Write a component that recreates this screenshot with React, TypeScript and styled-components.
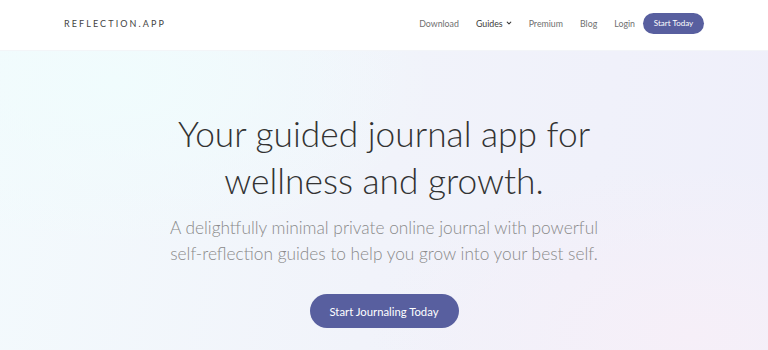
import React from 'react';
import styled, { createGlobalStyle } from 'styled-components';

const GlobalStyle = createGlobalStyle`
  html, body {
    margin: 0;
    padding: 0;
    background: #fff;
  }
  body {
    font-family: 'Lato', 'Open Sans', sans-serif;
    -webkit-font-smoothing: antialiased;
  }
`;

const Page = styled.div`
  width: 768px;
  height: 350px;
  overflow: hidden;
  display: flex;
  flex-direction: column;
`;

const Header = styled.header`
  box-sizing: border-box;
  height: 51px;
  flex-shrink: 0;
  display: flex;
  align-items: center;
  justify-content: space-between;
  padding: 0 64px 4px;
  background: #fff;
  border-bottom: 1px solid #f3f5f8;
`;

const Logo = styled.div`
  font-size: 9px;
  letter-spacing: 2.1px;
  color: #444;
  font-weight: 400;
  padding-top: 1px;
`;

const Nav = styled.nav`
  display: flex;
  align-items: center;
  gap: 17px;
`;

const NavLink = styled.a<{ $dark?: boolean }>`
  font-size: 8.8px;
  color: ${(p) => (p.$dark ? '#3d3d3d' : '#707070')};
  text-decoration: none;
  display: flex;
  align-items: center;
  gap: 3px;
`;

const Chevron = styled.svg`
  width: 6px;
  height: 6px;
`;

const NavButton = styled.a`
  margin-left: -9px;
  width: 61px;
  height: 21px;
  border-radius: 11px;
  background: #585f9f;
  color: #fff;
  font-size: 8px;
  display: flex;
  align-items: center;
  justify-content: center;
  text-decoration: none;
`;

const Hero = styled.section`
  flex: 1;
  display: flex;
  flex-direction: column;
  align-items: center;
  padding-top: 59px;
  background:
    radial-gradient(ellipse 60% 80% at 15% 10%, rgba(240, 252, 253, 1) 0%, rgba(240, 252, 253, 0) 70%),
    radial-gradient(ellipse 60% 80% at 90% 95%, rgba(246, 239, 248, 1) 0%, rgba(246, 239, 248, 0) 70%),
    linear-gradient(100deg, #f3fafd 0%, #f1f3fa 50%, #efeffa 100%);
`;

const Title = styled.h1`
  margin: 0;
  font-size: 35.3px;
  line-height: 47px;
  font-weight: 300;
  color: #333;
  text-align: center;
  width: 430px;
`;

const Subtitle = styled.p`
  margin: 11px 0 0;
  font-size: 17.3px;
  line-height: 26px;
  font-weight: 300;
  color: #8a8a8a;
  text-align: center;
  width: 450px;
`;

const CTA = styled.a`
  margin-top: 27px;
  width: 149px;
  height: 34px;
  border-radius: 17px;
  background: #585f9f;
  color: #fff;
  font-size: 11.3px;
  display: flex;
  align-items: center;
  justify-content: center;
  text-decoration: none;
`;

export default function App() {
  return (
    <Page>
      <GlobalStyle />
      <Header>
        <Logo>REFLECTION.APP</Logo>
        <Nav>
          <NavLink>Download</NavLink>
          <NavLink $dark>
            Guides
            <Chevron viewBox="0 0 10 10">
              <path d="M2 3.5 L5 6.5 L8 3.5" fill="none" stroke="#3d3d3d" strokeWidth="1.8" strokeLinecap="round" strokeLinejoin="round" />
            </Chevron>
          </NavLink>
          <NavLink>Premium</NavLink>
          <NavLink>Blog</NavLink>
          <NavLink>Login</NavLink>
          <NavButton>Start Today</NavButton>
        </Nav>
      </Header>
      <Hero>
        <Title>Your guided journal app for wellness and growth.</Title>
        <Subtitle>
          A delightfully minimal private online journal with powerful self-reflection guides to help you grow into your best self.
        </Subtitle>
        <CTA>Start Journaling Today</CTA>
      </Hero>
    </Page>
  );
}
